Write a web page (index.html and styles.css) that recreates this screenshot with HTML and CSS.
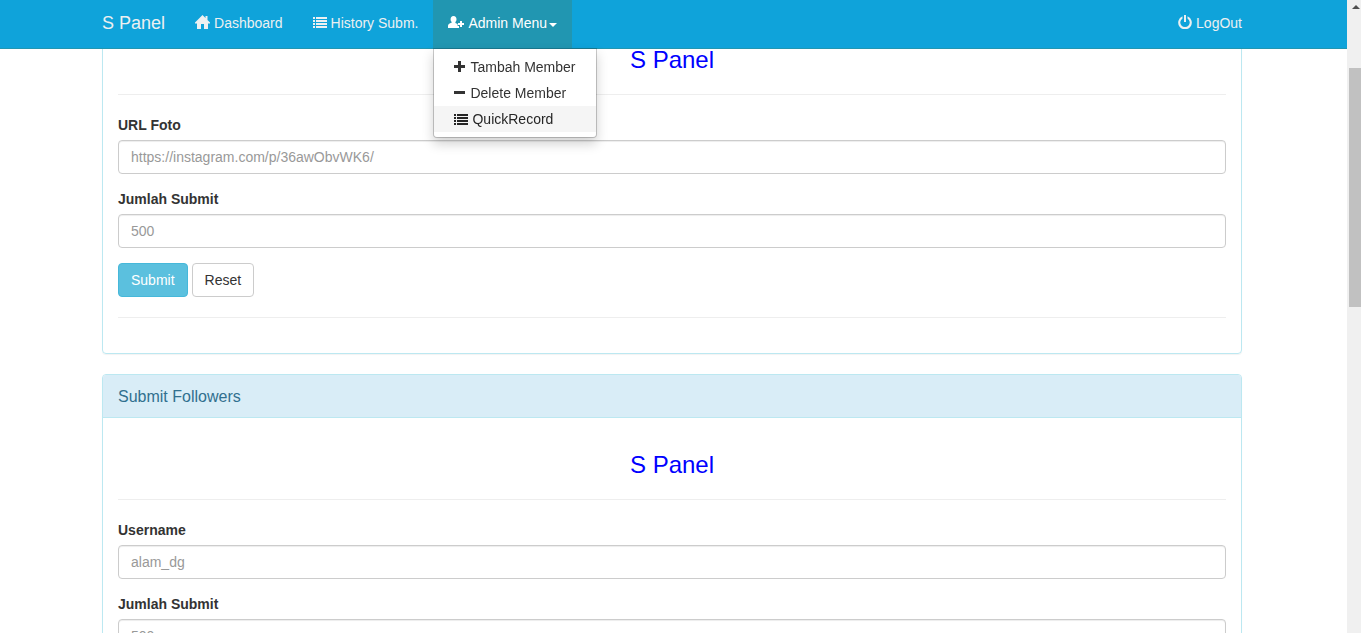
FILE: index.html
```html
<!DOCTYPE html>
<html lang="id">
<head>
    <meta charset="utf-8">
    <title>S Panel</title>
    <link rel="stylesheet" href="styles.css">
</head>
<body>
    <svg class="sprite" aria-hidden="true">
        <symbol id="icon-home" viewBox="0 0 15 14">
            <path d="M7.500 0 L10.500 3 V1 H12.500 V5 L15 7.500 V8.500 H13 V14 H9 V9 H6 V14 H2 V8.500 H0 V7.500 Z"/>
        </symbol>
        <symbol id="icon-list" viewBox="0 0 14 11">
            <path d="M0 0h2v2H0z M3 0h11v2H3z M0 3h2v2H0z M3 3h11v2H3z M0 6h2v2H0z M3 6h11v2H3z M0 9h2v2H0z M3 9h11v2H3z"/>
        </symbol>
        <symbol id="icon-user-add" viewBox="0 0 16 12">
            <path d="M5.500 0C7.500 0 8.500 1.400 8.500 3.200C8.500 4.500 8 5.400 7.400 6V7L9.600 8V10H11V12H0V10.200C0 9 .6 8 1.600 7.500L3.800 6.500V6C3 5.400 2.600 4.500 2.600 3.200C2.600 1.400 3.600 0 5.500 0Z M12 5h2v2h2v2h-2v2h-2V9h-2V7h2z"/>
        </symbol>
        <symbol id="icon-plus" viewBox="0 0 12 12">
            <path d="M4 0h3v4h4v3H7v4H4V7H0V4h4z"/>
        </symbol>
        <symbol id="icon-minus" viewBox="0 0 12 12">
            <path d="M0 4h11v3H0z"/>
        </symbol>
        <symbol id="icon-off" viewBox="0 0 14 14">
            <path d="M6 0h2v7H6z M4.500 1.200v2.200A4.700 4.700 0 1 0 9.500 3.400V1.200A6.800 6.800 0 1 1 4.500 1.200z"/>
        </symbol>
    </svg>

    <nav class="navbar">
        <div class="container">
            <a class="brand" href="#">S Panel</a>
            <ul class="nav">
                <li><a href="#"><svg class="icon home"><use href="#icon-home"/></svg>Dashboard</a></li>
                <li><a href="#"><svg class="icon list"><use href="#icon-list"/></svg>History Subm.</a></li>
                <li class="open">
                    <a href="#"><svg class="icon user"><use href="#icon-user-add"/></svg>Admin Menu<span class="caret"></span></a>
                    <ul class="dropdown">
                        <li><a href="#"><svg class="icon sign"><use href="#icon-plus"/></svg>Tambah Member</a></li>
                        <li><a href="#"><svg class="icon sign"><use href="#icon-minus"/></svg>Delete Member</a></li>
                        <li><a class="hover" href="#"><svg class="icon list"><use href="#icon-list"/></svg>QuickRecord</a></li>
                    </ul>
                </li>
            </ul>
            <ul class="nav right">
                <li><a href="#"><svg class="icon off"><use href="#icon-off"/></svg>LogOut</a></li>
            </ul>
        </div>
    </nav>

    <main class="container">
        <section class="panel">
            <div class="panel-body">
                <h3>S Panel</h3>
                <hr>
                <form>
                    <div class="form-group">
                        <label for="url">URL Foto</label>
                        <input type="text" id="url" placeholder="https://instagram.com/p/36awObvWK6/">
                    </div>
                    <div class="form-group">
                        <label for="jumlah">Jumlah Submit</label>
                        <input type="text" id="jumlah" placeholder="500">
                    </div>
                    <div class="buttons">
                        <button type="submit" class="btn btn-info">Submit</button>
                        <button type="reset" class="btn">Reset</button>
                    </div>
                </form>
                <hr>
            </div>
        </section>

        <section class="panel">
            <div class="panel-heading">Submit Followers</div>
            <div class="panel-body">
                <h3>S Panel</h3>
                <hr>
                <form>
                    <div class="form-group">
                        <label for="username">Username</label>
                        <input type="text" id="username" placeholder="alam_dg">
                    </div>
                    <div class="form-group">
                        <label for="jumlah2">Jumlah Submit</label>
                        <input type="text" id="jumlah2" placeholder="500">
                    </div>
                </form>
            </div>
        </section>
    </main>

    <div class="scrollbar">
        <span class="arrow"></span>
        <span class="thumb"></span>
    </div>
</body>
</html>
```

FILE: styles.css
```css
* {
    box-sizing: border-box;
}

body {
    margin: 0;
    padding: 12px 17px 0 0;
    height: 100vh;
    overflow: hidden;
    background-color: #fff;
    color: #333;
    font-family: "Liberation Sans", Arial, sans-serif;
    font-size: 14px;
    line-height: 20px;
}

ul {
    list-style: none;
    margin: 0;
    padding: 0;
}

a {
    text-decoration: none;
}

.sprite {
    display: none;
}

.icon {
    fill: currentColor;
    flex: none;
    margin-right: 4px;
}

.home {
    width: 15px;
    height: 14px;
}

.list {
    width: 14px;
    height: 11px;
}

.user {
    width: 16px;
    height: 12px;
}

.sign {
    width: 12px;
    height: 12px;
}

.off {
    width: 14px;
    height: 14px;
}

.container {
    width: 100%;
    max-width: 1170px;
    margin: 0 auto;
    padding: 0 15px;
}

/* navbar */
.navbar {
    position: fixed;
    z-index: 10;
    top: 0;
    left: 0;
    right: 14px;
    padding-right: 3px;
    background-color: #0fa3da;
    border-bottom: 1px solid #2196b1;
}

.navbar .container {
    display: flex;
}

.navbar a {
    color: #ecf0f1;
}

.brand {
    padding: 13px 15px 15px 0;
    font-size: 18px;
}

.nav {
    display: flex;
}

.nav > li {
    position: relative;
}

.nav > li > a {
    display: flex;
    align-items: center;
    padding: 13px 15px 15px;
}

.nav > li > a .icon {
    margin-bottom: 2px;
}

.nav .open > a {
    background-color: #2196b1;
    color: #fff;
}

.right {
    margin-left: auto;
}

.nav.right > li > a {
    padding-right: 0;
}

.caret {
    border-top: 4px solid;
    border-left: 4px solid transparent;
    border-right: 4px solid transparent;
    margin: 3px 0 0 2px;
}

.dropdown {
    position: absolute;
    top: 100%;
    left: 0;
    min-width: 164px;
    padding: 5px 0;
    background-color: #fff;
    border: 1px solid rgba(0, 0, 0, 0.2);
    border-radius: 0 0 4px 4px;
    box-shadow: 0 6px 12px rgba(0, 0, 0, 0.175);
    background-clip: padding-box;
}

.navbar .dropdown a {
    display: flex;
    align-items: center;
    padding: 3px 20px;
    color: #333;
    white-space: nowrap;
}

.navbar .dropdown a.hover {
    background-color: #f5f5f5;
    color: #262626;
}

/* panels */
.panel {
    margin-bottom: 20px;
    border: 1px solid #bce8f1;
    border-radius: 4px;
    box-shadow: 0 1px 1px rgba(0, 0, 0, 0.05);
}

.panel-heading {
    padding: 11px 15px 9px;
    background-color: #d9edf7;
    border-bottom: 1px solid #bce8f1;
    border-radius: 3px 3px 0 0;
    color: #31708f;
    font-size: 16px;
    line-height: 22px;
}

.panel-body {
    display: flow-root;
    padding: 0 15px 15px;
}

h3 {
    margin: 34px 0 21px;
    color: #00f;
    font-size: 24px;
    font-weight: normal;
    line-height: 26px;
    text-align: center;
}

hr {
    margin: 20px 0;
    border: 0;
    border-top: 1px solid #eee;
}

.form-group {
    margin-bottom: 15px;
}

label {
    display: block;
    margin-bottom: 5px;
    font-weight: bold;
}

input {
    display: block;
    width: 100%;
    height: 34px;
    padding: 6px 12px;
    border: 1px solid #ccc;
    border-radius: 4px;
    box-shadow: inset 0 1px 1px rgba(0, 0, 0, 0.075);
    font: inherit;
    color: #555;
}

input::placeholder {
    color: #999;
    opacity: 1;
}

.buttons {
    display: flex;
    gap: 4px;
}

.btn {
    padding: 6px 12px;
    border: 1px solid #ccc;
    border-radius: 4px;
    background-color: #fff;
    color: #333;
    font: inherit;
    line-height: 20px;
    cursor: pointer;
}

.btn-info {
    background-color: #5bc0de;
    border-color: #46b8da;
    color: #fff;
}

/* scrollbar */
.scrollbar {
    position: fixed;
    top: 0;
    right: 0;
    bottom: 0;
    width: 14px;
    padding: 5px 0 0 2px;
    background-color: #f0f0f0;
}

.arrow {
    display: block;
    width: 8px;
    margin-left: 3px;
    border-bottom: 4px solid #505050;
    border-left: 4px solid transparent;
    border-right: 4px solid transparent;
}

.thumb {
    display: block;
    height: 239px;
    margin-top: 59px;
    background-color: #c1c1c1;
}
```
